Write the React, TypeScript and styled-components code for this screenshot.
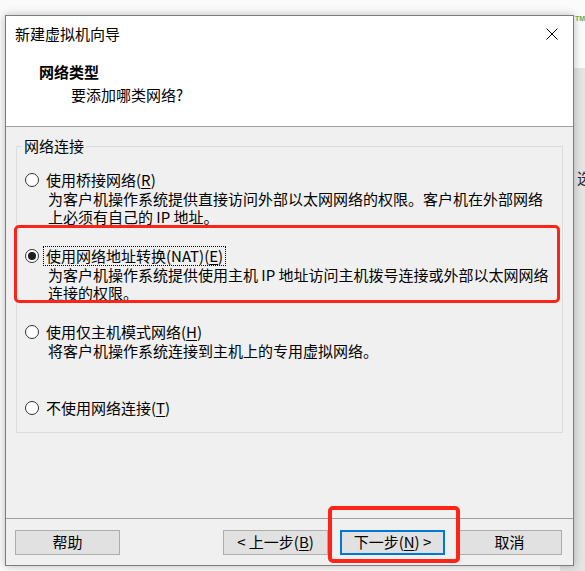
import React from 'react'
import styled, { createGlobalStyle } from 'styled-components'

const GlobalStyle = createGlobalStyle`
  html, body {
    margin: 0;
    padding: 0;
    background: #fafafa;
  }
  body {
    font-family: "Noto Sans CJK SC", "Noto Sans", sans-serif;
    color: #000;
  }
`

type OptionData = {
  label: string
  key: string
  lines: string[]
  checked?: boolean
}

const options: OptionData[] = [
  {
    label: '使用桥接网络',
    key: 'R',
    lines: [
      '为客户机操作系统提供直接访问外部以太网网络的权限。客户机在外部网络',
      '上必须有自己的 IP 地址。',
    ],
  },
  {
    label: '使用网络地址转换(NAT)',
    key: 'E',
    checked: true,
    lines: [
      '为客户机操作系统提供使用主机 IP 地址访问主机拨号连接或外部以太网网络',
      '连接的权限。',
    ],
  },
  {
    label: '使用仅主机模式网络',
    key: 'H',
    lines: ['将客户机操作系统连接到主机上的专用虚拟网络。'],
  },
  {
    label: '不使用网络连接',
    key: 'T',
    lines: [],
  },
]

const App = () => {
  return (
    <Desktop>
      <GlobalStyle />
      <BackWindow>
        <Mark>TM</Mark>
        <BackText>选</BackText>
      </BackWindow>

      <Window>
        <TitleBar>
          <Title>新建虚拟机向导</Title>
          <CloseButton>
            <svg width="12" height="12" viewBox="0 0 12 12">
              <path d="M0.5 0.5 L11.5 11.5 M11.5 0.5 L0.5 11.5" stroke="#000" strokeWidth="1" fill="none" />
            </svg>
          </CloseButton>
        </TitleBar>

        <Header>
          <Heading>网络类型</Heading>
          <Subheading>要添加哪类网络?</Subheading>
        </Header>

        <Body>
          <Group>
            <Legend>网络连接</Legend>
            <OptionList>
              {options.map(o => (
                <Option key={o.key} $tall={o.lines.length > 0}>
                  <RadioRow>
                    <Radio $checked={!!o.checked} />
                    <Label $focused={!!o.checked}>
                      {o.label}(<U>{o.key}</U>)
                    </Label>
                  </RadioRow>
                  {o.lines.length > 0 && (
                    <Desc>
                      {o.lines.map((l, j) => (
                        <DescLine key={j}>{l}</DescLine>
                      ))}
                    </Desc>
                  )}
                  {o.checked && <Highlight $top={-21} $right={-6} $bottom={-1} $left={-11} $width={3} />}
                </Option>
              ))}
            </OptionList>
          </Group>
        </Body>

        <Footer>
          <Button>帮助</Button>
          <Spacer />
          <ButtonGroup>
            <Button>
              &lt; 上一步(<U>B</U>)
            </Button>
            <Marked>
              <Button $primary>
                下一步(<U>N</U>) &gt;
              </Button>
              <Highlight $top={-24} $right={-15} $bottom={-8} $left={-12} $width={4} />
            </Marked>
            <Button>取消</Button>
          </ButtonGroup>
        </Footer>
      </Window>
    </Desktop>
  )
}

export default App

const Desktop = styled.div`
  position: relative;
  width: 585px;
  height: 571px;
  overflow: hidden;
  background: #fafafa;
  padding: 15px 0 0 5px;
  box-sizing: border-box;
`

const BackWindow = styled.div`
  position: absolute;
  top: 0;
  left: 560px;
  right: 0;
  bottom: 0;
  background: linear-gradient(#fbfbfb 0, #fbfbfb 68px, #e4e4e4 68px);
`

const Mark = styled.div`
  position: absolute;
  top: 15px;
  left: 15px;
  font-family: "Liberation Sans", sans-serif;
  font-size: 7px;
  font-weight: 700;
  color: #6fae3a;
`

const BackText = styled.div`
  position: absolute;
  top: 168px;
  left: 17px;
  font-size: 15px;
  line-height: 20px;
  color: #222;
`

const Window = styled.div`
  position: relative;
  z-index: 1;
  width: 569px;
  height: 551px;
  box-sizing: border-box;
  border: 1px solid #7d7d7d;
  background: #f0f0f0;
  box-shadow: 0 0 8px rgba(0, 0, 0, 0.25);
  display: flex;
  flex-direction: column;
`

const TitleBar = styled.div`
  height: 36px;
  display: flex;
  align-items: center;
  justify-content: space-between;
  padding: 0 15px 0 9px;
  background: #fff;
`

const Title = styled.div`
  font-size: 15px;
  line-height: 20px;
`

const CloseButton = styled.div`
  display: flex;
  width: 12px;
  height: 12px;
`

const Header = styled.div`
  background: #fff;
  padding: 10px 0 21px 33px;
  border-bottom: 1px solid #a0a0a0;
  display: flex;
  flex-direction: column;
  gap: 3px;
`

const Heading = styled.div`
  font-size: 15px;
  line-height: 20px;
  font-weight: 700;
`

const Subheading = styled.div`
  font-size: 15px;
  line-height: 20px;
  padding-left: 32px;
`

const Body = styled.div`
  flex: 1;
  padding: 9px 10px 0;
`

const Group = styled.fieldset`
  margin: 0;
  padding: 0 8px 14px;
  border: 1px solid #dcdcdc;
  min-width: 0;
`

const Legend = styled.legend`
  font-size: 15px;
  line-height: 20px;
  padding: 0 2px;
  margin-left: -3px;
`

const OptionList = styled.div`
  display: flex;
  flex-direction: column;
  gap: 20px;
  padding-top: 14px;
`

const Option = styled.div<{ $tall: boolean }>`
  position: relative;
  min-height: ${p => (p.$tall ? '56px' : '20px')};
`

const RadioRow = styled.div`
  display: flex;
  align-items: center;
  height: 20px;
  gap: 5px;
`

const Radio = styled.span<{ $checked: boolean }>`
  position: relative;
  flex: none;
  width: 14px;
  height: 14px;
  box-sizing: border-box;
  border-radius: 50%;
  border: 1px solid #333;
  background: #fff;

  &::after {
    content: '';
    display: ${p => (p.$checked ? 'block' : 'none')};
    position: absolute;
    top: 2px;
    left: 2px;
    width: 8px;
    height: 8px;
    border-radius: 50%;
    background: #1f1f1f;
  }
`

const Label = styled.span<{ $focused: boolean }>`
  font-size: 15px;
  line-height: 18px;
  padding: 0 2px;
  white-space: nowrap;
  outline: ${p => (p.$focused ? '1px dotted #000' : 'none')};
`

const U = styled.span`
  text-decoration: underline;
  text-underline-offset: 2px;
`

const Desc = styled.div`
  padding-left: 23px;
  font-size: 15px;
  white-space: nowrap;
`

const DescLine = styled.div`
  height: 18px;
  line-height: 18px;
`

const Highlight = styled.div<{ $top: number; $right: number; $bottom: number; $left: number; $width: number }>`
  position: absolute;
  top: ${p => p.$top}px;
  right: ${p => p.$right}px;
  bottom: ${p => p.$bottom}px;
  left: ${p => p.$left}px;
  border: ${p => p.$width}px solid #ff2418;
  border-radius: 5px;
  pointer-events: none;
  z-index: 2;
`

const Footer = styled.div`
  display: flex;
  align-items: center;
  height: 47px;
  box-sizing: border-box;
  padding: 0 11px 0 9px;
  border-top: 1px solid #a0a0a0;
`

const Spacer = styled.div`
  flex: 1;
`

const ButtonGroup = styled.div`
  display: flex;
  gap: 12px;
`

const Marked = styled.div`
  position: relative;
  display: flex;
`

const Button = styled.button<{ $primary?: boolean }>`
  width: 105px;
  height: 25px;
  box-sizing: border-box;
  margin: 0;
  padding: 0;
  font-family: inherit;
  font-size: 15px;
  line-height: 20px;
  color: #000;
  background: #e1e1e1;
  border: ${p => (p.$primary ? '2px solid #0078d7' : '1px solid #adadad')};
  border-radius: 0;
`
